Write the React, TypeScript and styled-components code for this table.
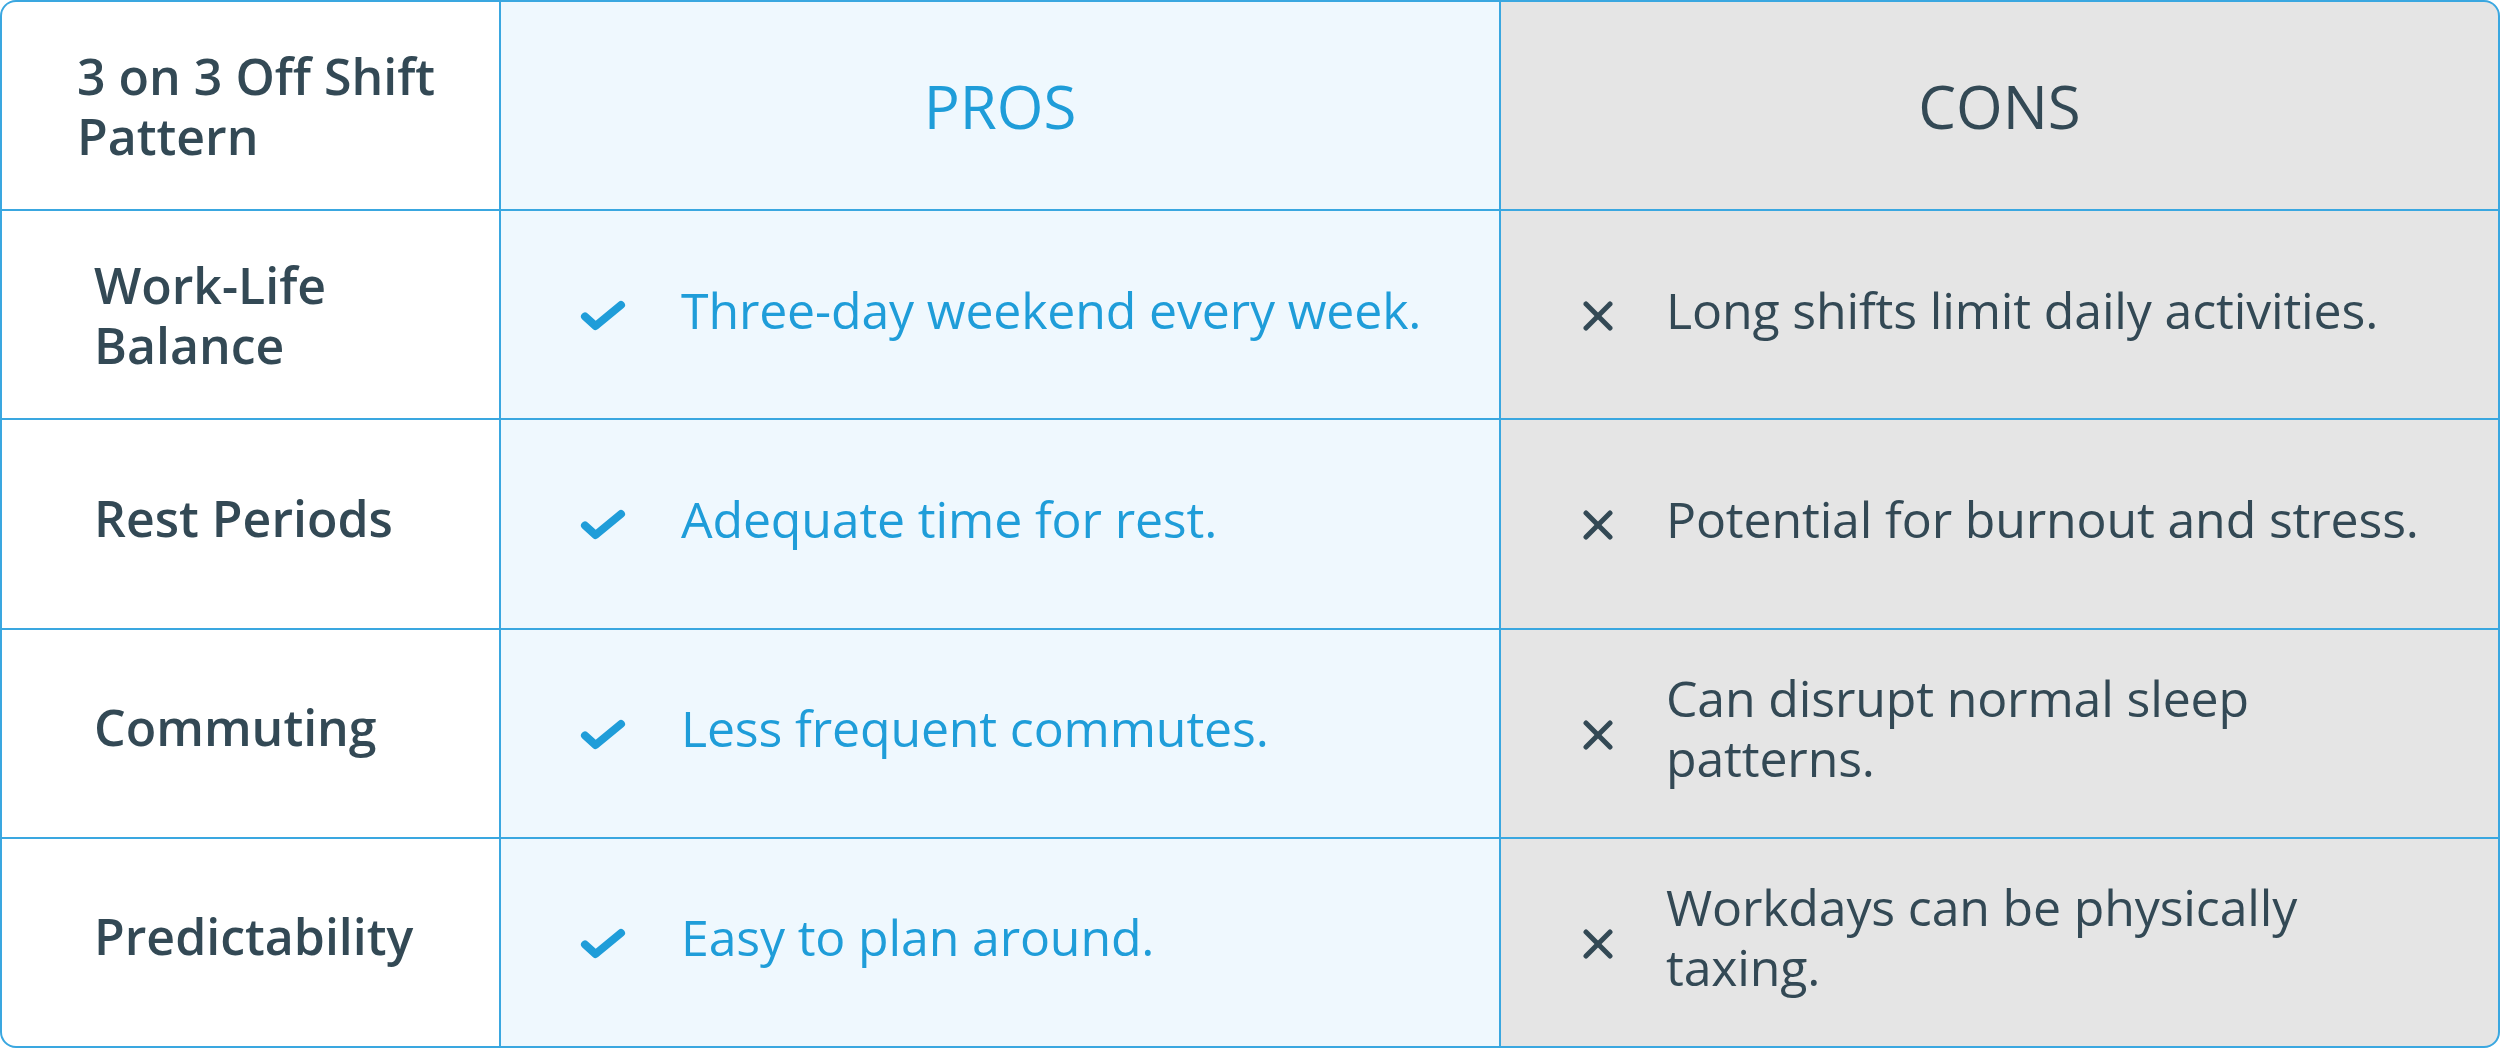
import React from "react";
import styled, { createGlobalStyle } from "styled-components";

const Global = createGlobalStyle`
  html, body { margin: 0; padding: 0; background: #ffffff; }
  body { font-family: "Open Sans", "Noto Sans", sans-serif; }
  * { box-sizing: border-box; }
`;

const BORDER = "#3aa7e0";
const DARK = "#334955";
const BLUE = "#1f9dd9";

const Table = styled.div`
  width: 2500px;
  height: 1048px;
  border: 2px solid ${BORDER};
  border-radius: 16px;
  overflow: hidden;
  display: grid;
  grid-template-columns: 497px 998px 1fr;
  grid-template-rows: repeat(5, 1fr);
  gap: 2px;
  background: ${BORDER};
`;

const Cell = styled.div<{ $tone: "plain" | "pros" | "cons" }>`
  display: flex;
  align-items: center;
  background: ${(p) =>
    p.$tone === "pros" ? "#eff8fe" : p.$tone === "cons" ? "#e5e5e5" : "#ffffff"};
`;

const CornerLabel = styled(Cell)`
  padding-left: 75px;
  padding-right: 40px;
`;

const RowLabel = styled(Cell)`
  padding-left: 92px;
  padding-right: 40px;
`;

const LabelText = styled.div<{ $single?: boolean }>`
  font-size: 50px;
  line-height: 60px;
  font-weight: 600;
  color: ${DARK};
  margin-bottom: ${(p) => (p.$single ? 12 : 0)}px;
`;

const HeadCell = styled(Cell)`
  justify-content: center;
`;

const HeadText = styled.div<{ $color: string }>`
  font-size: 60px;
  line-height: 72px;
  font-weight: 400;
  color: ${(p) => p.$color};
`;

const ItemCell = styled(Cell)<{ $pad: number }>`
  padding-left: ${(p) => p.$pad}px;
  padding-right: 60px;
`;

const IconBox = styled.div<{ $w: number; $gap: number }>`
  flex: none;
  width: ${(p) => p.$w}px;
  margin-right: ${(p) => p.$gap}px;
  margin-top: 3px;
  display: flex;
  align-items: center;
`;

const ItemText = styled.div<{ $color: string }>`
  font-size: 50px;
  line-height: 60px;
  font-weight: 400;
  letter-spacing: -0.15px;
  color: ${(p) => p.$color};
  margin-bottom: 10px;
`;

const Check = () => (
  <svg width="45" height="30" viewBox="0 0 45 30" style={{ overflow: "visible" }}>
    <polyline
      points="4,15.5 14.5,25 40,4"
      fill="none"
      stroke={BLUE}
      strokeWidth="8"
      strokeLinecap="round"
      strokeLinejoin="round"
    />
  </svg>
);

const Cross = () => (
  <svg width="30" height="30" viewBox="0 0 30 30">
    <g stroke={DARK} strokeWidth="5" strokeLinecap="round">
      <line x1="3" y1="3" x2="27" y2="27" />
      <line x1="27" y1="3" x2="3" y2="27" />
    </g>
  </svg>
);

const rows = [
  {
    label: "Work-Life Balance",
    labelBreak: true,
    pro: "Three-day weekend every week.",
    con: "Long shifts limit daily activities.",
  },
  {
    label: "Rest Periods",
    pro: "Adequate time for rest.",
    con: "Potential for burnout and stress.",
  },
  {
    label: "Commuting",
    pro: "Less frequent commutes.",
    con: "Can disrupt normal sleep patterns.",
  },
  {
    label: "Predictability",
    pro: "Easy to plan around.",
    con: "Workdays can be physically taxing.",
  },
];

export default function App() {
  return (
    <>
      <Global />
      <Table>
        <CornerLabel $tone="plain">
          <LabelText>
            3 on 3 Off Shift
            <br />
            Pattern
          </LabelText>
        </CornerLabel>
        <HeadCell $tone="pros">
          <HeadText $color={BLUE}>PROS</HeadText>
        </HeadCell>
        <HeadCell $tone="cons">
          <HeadText $color={DARK}>CONS</HeadText>
        </HeadCell>
        {rows.map((r, i) => (
          <React.Fragment key={i}>
            <RowLabel $tone="plain">
              {r.labelBreak ? (
                <LabelText>
                  Work-Life
                  <br />
                  Balance
                </LabelText>
              ) : (
                <LabelText $single>{r.label}</LabelText>
              )}
            </RowLabel>
            <ItemCell $tone="pros" $pad={80}>
              <IconBox $w={45} $gap={55}>
                <Check />
              </IconBox>
              <ItemText $color={BLUE}>{r.pro}</ItemText>
            </ItemCell>
            <ItemCell $tone="cons" $pad={82}>
              <IconBox $w={30} $gap={53}>
                <Cross />
              </IconBox>
              <ItemText $color={DARK}>{r.con}</ItemText>
            </ItemCell>
          </React.Fragment>
        ))}
      </Table>
    </>
  );
}
